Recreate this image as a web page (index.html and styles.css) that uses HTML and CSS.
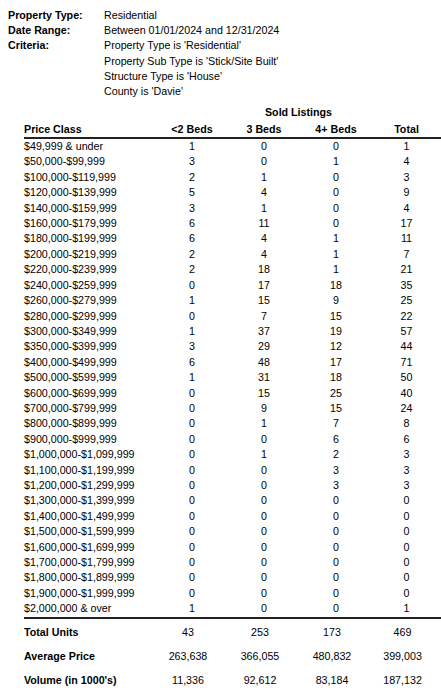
FILE: index.html
```
<!DOCTYPE html>
<html lang="en">

<head>
    <meta charset="UTF-8">
    <meta name="viewport" content="width=device-width, initial-scale=1.0">
    <title>Sold Listings by Price Class</title>
    <link rel="stylesheet" href="styles.css">
</head>

<body>

    <main class="report">
        <!-- Report criteria -->
        <div class="info">
            <div class="label">Property Type:</div>
            <div class="value">Residential</div>
            <div class="label">Date Range:</div>
            <div class="value">Between 01/01/2024 and 12/31/2024</div>
            <div class="label">Criteria:</div>
            <div class="value">
                Property Type is 'Residential'<br>
                Property Sub Type is 'Stick/Site Built'<br>
                Structure Type is 'House'<br>
                County is 'Davie'
            </div>
        </div>

        <table class="listings">
            <colgroup>
                <col class="col-class">
                <col class="col-num">
                <col class="col-num">
                <col class="col-num">
                <col class="col-last">
            </colgroup>
            <thead>
                <tr class="group">
                    <th></th>
                    <th colspan="4">Sold Listings</th>
                </tr>
                <tr class="heads">
                    <th class="price">Price Class</th>
                    <th>&lt;2 Beds</th>
                    <th>3 Beds</th>
                    <th>4+ Beds</th>
                    <th>Total</th>
                </tr>
            </thead>
            <tbody>
                <tr><td>$49,999 &amp; under</td><td>1</td><td>0</td><td>0</td><td>1</td></tr>
                <tr><td>$50,000-$99,999</td><td>3</td><td>0</td><td>1</td><td>4</td></tr>
                <tr><td>$100,000-$119,999</td><td>2</td><td>1</td><td>0</td><td>3</td></tr>
                <tr><td>$120,000-$139,999</td><td>5</td><td>4</td><td>0</td><td>9</td></tr>
                <tr><td>$140,000-$159,999</td><td>3</td><td>1</td><td>0</td><td>4</td></tr>
                <tr><td>$160,000-$179,999</td><td>6</td><td>11</td><td>0</td><td>17</td></tr>
                <tr><td>$180,000-$199,999</td><td>6</td><td>4</td><td>1</td><td>11</td></tr>
                <tr><td>$200,000-$219,999</td><td>2</td><td>4</td><td>1</td><td>7</td></tr>
                <tr><td>$220,000-$239,999</td><td>2</td><td>18</td><td>1</td><td>21</td></tr>
                <tr><td>$240,000-$259,999</td><td>0</td><td>17</td><td>18</td><td>35</td></tr>
                <tr><td>$260,000-$279,999</td><td>1</td><td>15</td><td>9</td><td>25</td></tr>
                <tr><td>$280,000-$299,999</td><td>0</td><td>7</td><td>15</td><td>22</td></tr>
                <tr><td>$300,000-$349,999</td><td>1</td><td>37</td><td>19</td><td>57</td></tr>
                <tr><td>$350,000-$399,999</td><td>3</td><td>29</td><td>12</td><td>44</td></tr>
                <tr><td>$400,000-$499,999</td><td>6</td><td>48</td><td>17</td><td>71</td></tr>
                <tr><td>$500,000-$599,999</td><td>1</td><td>31</td><td>18</td><td>50</td></tr>
                <tr><td>$600,000-$699,999</td><td>0</td><td>15</td><td>25</td><td>40</td></tr>
                <tr><td>$700,000-$799,999</td><td>0</td><td>9</td><td>15</td><td>24</td></tr>
                <tr><td>$800,000-$899,999</td><td>0</td><td>1</td><td>7</td><td>8</td></tr>
                <tr><td>$900,000-$999,999</td><td>0</td><td>0</td><td>6</td><td>6</td></tr>
                <tr><td>$1,000,000-$1,099,999</td><td>0</td><td>1</td><td>2</td><td>3</td></tr>
                <tr><td>$1,100,000-$1,199,999</td><td>0</td><td>0</td><td>3</td><td>3</td></tr>
                <tr><td>$1,200,000-$1,299,999</td><td>0</td><td>0</td><td>3</td><td>3</td></tr>
                <tr><td>$1,300,000-$1,399,999</td><td>0</td><td>0</td><td>0</td><td>0</td></tr>
                <tr><td>$1,400,000-$1,499,999</td><td>0</td><td>0</td><td>0</td><td>0</td></tr>
                <tr><td>$1,500,000-$1,599,999</td><td>0</td><td>0</td><td>0</td><td>0</td></tr>
                <tr><td>$1,600,000-$1,699,999</td><td>0</td><td>0</td><td>0</td><td>0</td></tr>
                <tr><td>$1,700,000-$1,799,999</td><td>0</td><td>0</td><td>0</td><td>0</td></tr>
                <tr><td>$1,800,000-$1,899,999</td><td>0</td><td>0</td><td>0</td><td>0</td></tr>
                <tr><td>$1,900,000-$1,999,999</td><td>0</td><td>0</td><td>0</td><td>0</td></tr>
                <tr class="last"><td>$2,000,000 &amp; over</td><td>1</td><td>0</td><td>0</td><td>1</td></tr>
            </tbody>
            <tfoot>
                <tr class="first">
                    <th>Total Units</th><td>43</td><td>253</td><td>173</td><td>469</td>
                </tr>
                <tr>
                    <th>Average Price</th><td>263,638</td><td>366,055</td><td>480,832</td><td>399,003</td>
                </tr>
                <tr>
                    <th>Volume (in 1000's)</th><td>11,336</td><td>92,612</td><td>83,184</td><td>187,132</td>
                </tr>
            </tfoot>
        </table>
    </main>

</body>

</html>
```

FILE: styles.css
```
html,
body {
    overflow-x: hidden;
}

body {
    font-family: "Liberation Sans", Arial, sans-serif;
    font-size: 10.7px;
    line-height: 15.4px;
    color: #000;
    background-color: #fff;
    margin: 0;
    padding: 8px 0 0 8px;
}

.info {
    display: grid;
    grid-template-columns: 96px 1fr;
    line-height: 15.2px;
}

.info .label {
    font-weight: bold;
}

.listings {
    width: 417px;
    margin: 6px 0 0 16px;
    border-collapse: collapse;
    table-layout: fixed;
}

.col-class {
    width: 132px;
}

.col-num {
    width: 72px;
}

.col-last {
    width: 69px;
}

.listings th,
.listings td {
    padding: 0;
    text-align: center;
    white-space: nowrap;
}

.listings th {
    font-weight: bold;
}

.listings .group th {
    padding-bottom: 1px;
}

.listings .heads th {
    border-bottom: 2px solid #222;
}

.listings .heads .price,
.listings tbody td:first-child,
.listings tfoot th {
    text-align: left;
}

.listings tbody .last td {
    border-bottom: 2px solid #222;
}

.listings tfoot th,
.listings tfoot td {
    padding: 4px 8px 4.6px 0;
}

.listings tfoot .first th,
.listings tfoot .first td {
    padding-top: 6px;
}
```
